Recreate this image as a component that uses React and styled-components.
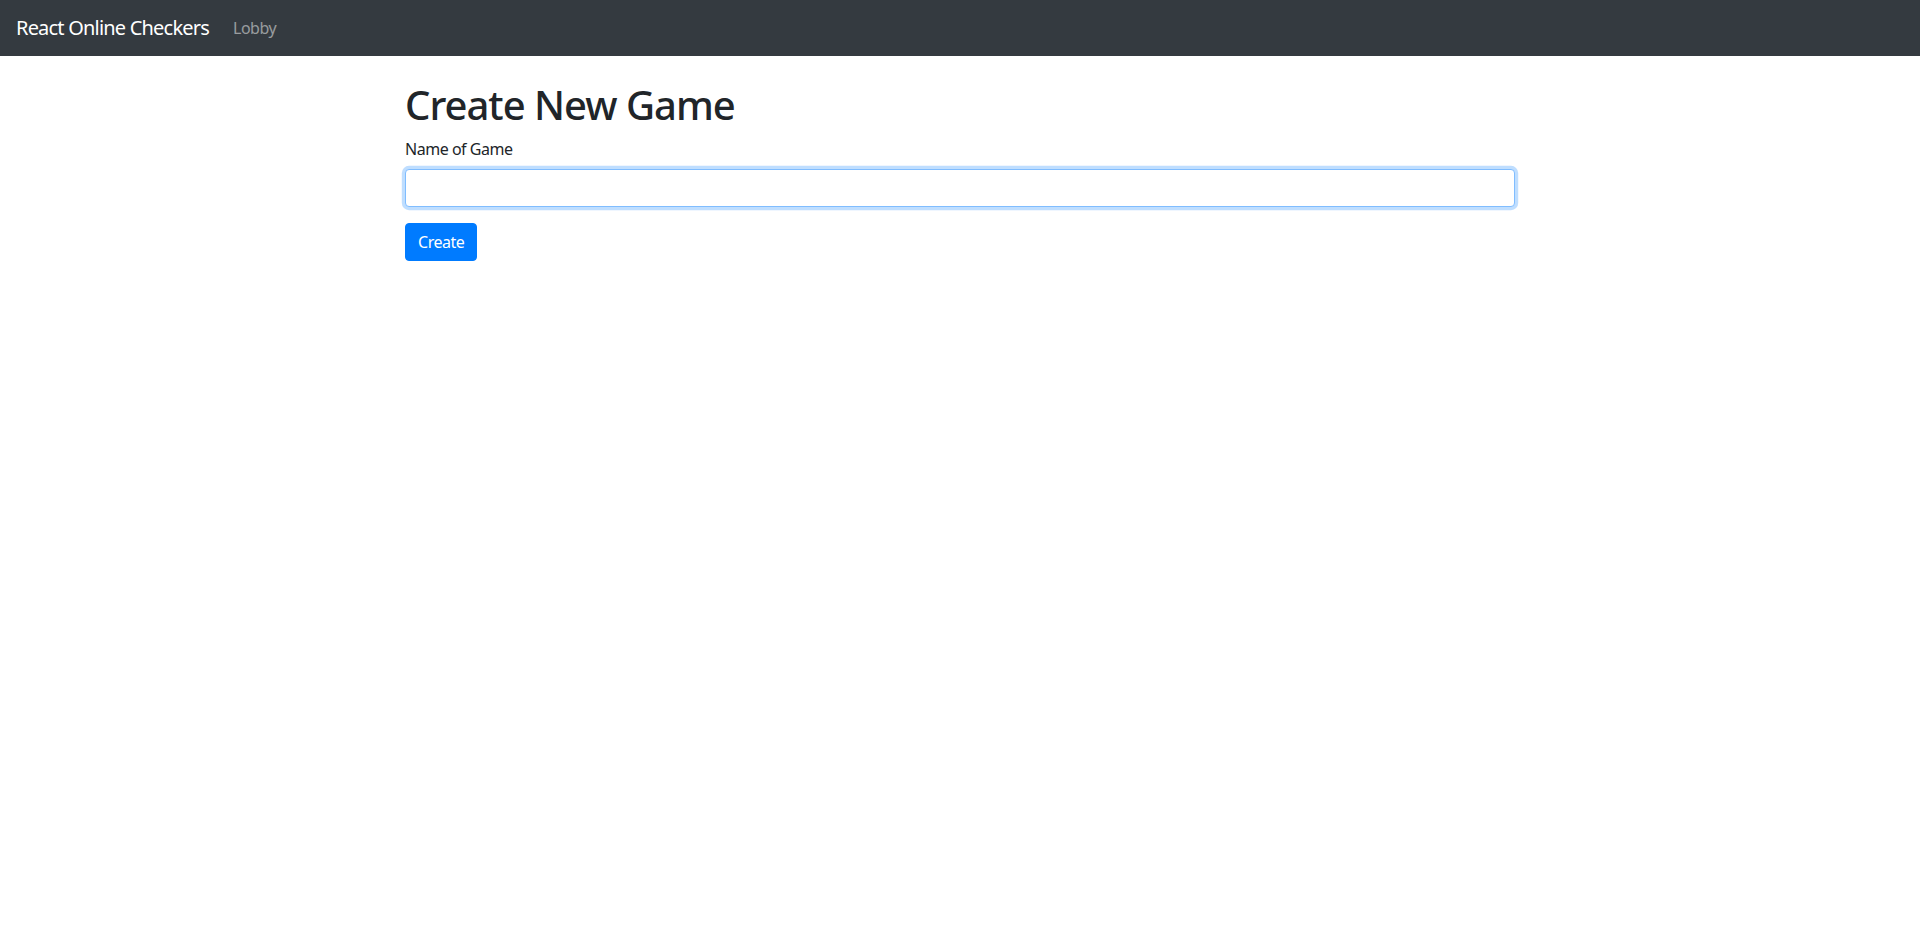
import React from 'react';
import styled, { createGlobalStyle } from 'styled-components';

const GlobalStyle = createGlobalStyle`
  *, *::before, *::after {
    box-sizing: border-box;
  }
  body {
    margin: 0;
    font-family: "Noto Sans", "Open Sans", "Liberation Sans", sans-serif;
    font-size: 16px;
    line-height: 1.5;
    letter-spacing: -0.03em;
    color: #212529;
    background: #fff;
  }
`;

const Navbar = styled.nav`
  display: flex;
  align-items: center;
  height: 56px;
  padding: 8px 16px;
  background-color: #343a40;
`;

const Brand = styled.a`
  margin-right: 16px;
  padding: 5px 0;
  font-size: 20px;
  line-height: 30px;
  letter-spacing: -0.04em;
  color: #fff;
  text-decoration: none;
  white-space: nowrap;
`;

const NavLink = styled.a`
  padding: 8px;
  color: rgba(255, 255, 255, 0.5);
  text-decoration: none;
`;

const Container = styled.main`
  max-width: 1140px;
  margin: 25px auto 0;
  padding: 0 15px;
`;

const Title = styled.h1`
  margin: 0 0 8px;
  font-size: 40px;
  font-weight: 500;
  line-height: 1.2;
  letter-spacing: -0.025em;
`;

const FormGroup = styled.div`
  margin-bottom: 16px;
`;

const Label = styled.label`
  display: inline-block;
  margin-bottom: 8px;
`;

const Input = styled.input`
  display: block;
  width: 100%;
  height: 38px;
  padding: 6px 12px;
  font-family: inherit;
  font-size: 16px;
  line-height: 1.5;
  color: #495057;
  background-color: #fff;
  border: 1px solid #80bdff;
  border-radius: 4px;
  outline: 0;
  box-shadow: 0 0 0 3.2px rgba(0, 123, 255, 0.25);
  caret-color: #495057;
`;

const Button = styled.button`
  display: inline-block;
  padding: 6px 12px;
  font-family: inherit;
  font-size: 16px;
  line-height: 1.5;
  letter-spacing: inherit;
  color: #fff;
  background-color: #007bff;
  border: 1px solid #007bff;
  border-radius: 4px;
  cursor: pointer;
`;

export default function App() {
  return (
    <>
      <GlobalStyle />
      <Navbar>
        <Brand href="#">React Online Checkers</Brand>
        <NavLink href="#">Lobby</NavLink>
      </Navbar>
      <Container>
        <Title>Create New Game</Title>
        <form onSubmit={e => e.preventDefault()}>
          <FormGroup>
            <Label htmlFor="gameName">Name of Game</Label>
            <Input id="gameName" type="text" autoFocus />
          </FormGroup>
          <Button type="submit">Create</Button>
        </form>
      </Container>
    </>
  );
}
